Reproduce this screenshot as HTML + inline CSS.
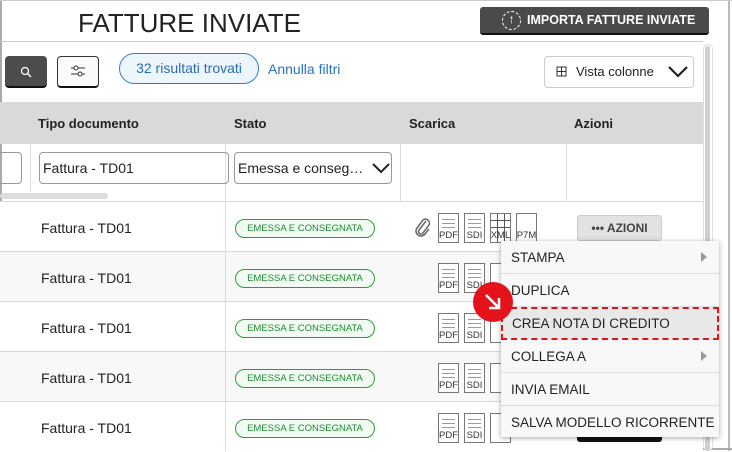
<!DOCTYPE html>
<html><head><meta charset="utf-8"><style>
*{box-sizing:border-box;margin:0;padding:0}
body{width:732px;height:451px;overflow:hidden;background:#fff;font-family:"Liberation Sans",Arial,sans-serif;position:relative;color:#222}
.a{position:absolute}
.row{position:absolute;left:0;width:703px;height:50px;border-bottom:1px solid #d8d8d8}
.ft{position:absolute;left:41px;font-size:14px;color:#222}
.badge{position:absolute;left:235px;width:140px;height:19px;border:1px solid #2e9a3c;border-radius:10px;background:#f2fbf3;color:#1e8a30;font-size:9.5px;text-align:center;line-height:17px}
.doc{position:absolute;width:21px;height:30px;border:1px solid #777;background:#fff;font-size:9.5px;text-align:center;color:#333;overflow:hidden}
.doc span{position:absolute;bottom:1px;left:-2px;right:-2px}
.doc i{position:absolute;left:3px;right:3px;height:1px;background:#999}
.mi{position:absolute;left:0;width:218px;height:33px;border-bottom:1px solid #ddd;font-size:13.5px;color:#222;padding-left:10px;line-height:33px}
.tri{position:absolute;right:12px;top:11px;width:0;height:0;border-left:6px solid #999;border-top:5px solid transparent;border-bottom:5px solid transparent}
</style></head><body>
<div class="a" style="left:0;top:0;width:2px;height:451px;background:#aaa"></div>
<div class="a" style="left:728px;top:0;width:2px;height:451px;background:#bbb"></div>
<div class="a" style="left:0;top:448px;width:732px;height:2px;background:#aaa"></div>
<div class="a" style="left:0;top:0;width:732px;height:1px;background:#ccc"></div>
<div class="a" style="left:78px;top:8px;font-size:26px;color:#222">FATTURE INVIATE</div>
<div class="a" style="left:480px;top:7px;width:229px;height:28px;background:#4a4a4a;border-radius:3px;border-bottom:2px solid #111;color:#fff;font-size:12.5px;font-weight:bold;line-height:26px;padding-left:47px">IMPORTA FATTURE INVIATE</div>
<div class="a" style="left:502px;top:11px;width:19px;height:19px;border:1.5px dashed #fff;border-radius:50%;color:#fff;font-size:12px;text-align:center;line-height:15px">↑</div>
<div class="a" style="left:0;top:41px;width:703px;height:1px;background:#ccc"></div>
<div class="a" style="left:5px;top:56px;width:42px;height:32px;background:#4c4c4c;border-radius:4px;border-bottom:2px solid #111"></div>
<svg class="a" style="left:20px;top:66px" width="12" height="12"><circle cx="5" cy="5" r="3.5" stroke="#fff" fill="none" stroke-width="1.3"/><line x1="7.5" y1="7.5" x2="11" y2="11" stroke="#fff" stroke-width="1.3"/></svg>
<div class="a" style="left:57px;top:56px;width:42px;height:32px;background:#fafafa;border:1px solid #333;border-radius:4px;border-bottom:2px solid #111"></div>
<svg class="a" style="left:70px;top:64px" width="16" height="14"><line x1="1" y1="4" x2="15" y2="4" stroke="#333"/><line x1="1" y1="10" x2="15" y2="10" stroke="#333"/><circle cx="6" cy="4" r="2" fill="#fff" stroke="#333"/><circle cx="10" cy="10" r="2" fill="#fff" stroke="#333"/></svg>
<div class="a" style="left:119px;top:53px;width:140px;height:31px;border:1px solid #2d7fd0;border-radius:16px;background:#eef6fd;color:#2a6cb0;font-size:14px;text-align:center;line-height:29px">32 risultati trovati</div>
<div class="a" style="left:268px;top:61px;font-size:14px;color:#2a72c4">Annulla filtri</div>
<div class="a" style="left:544px;top:56px;width:150px;height:32px;border:1px solid #ccc;border-radius:4px;background:#fff;font-size:13px;line-height:30px;padding-left:31px">Vista colonne</div>
<svg class="a" style="left:556px;top:66px" width="14" height="12"><rect x="1" y="1" width="9" height="9" fill="none" stroke="#333"/><line x1="5.5" y1="1" x2="5.5" y2="10" stroke="#333"/><line x1="1" y1="5.5" x2="10" y2="5.5" stroke="#333"/></svg>
<svg class="a" style="left:667px;top:64px" width="22" height="14"><polyline points="2,3 11,12 20,3" fill="none" stroke="#222" stroke-width="2.2"/></svg>
<div class="a" style="left:703px;top:44px;width:10px;height:407px;border:1px solid #e0e0e0;border-radius:5px;background:#fff"></div>
<div class="a" style="left:705px;top:46px;width:5px;height:405px;background:#cfcfcf;border-radius:3px"></div>
<div class="a" style="left:0;top:102px;width:703px;height:42px;background:#d9d9d9"></div>
<div class="a" style="left:38px;top:116px;font-size:13px;font-weight:bold">Tipo documento</div>
<div class="a" style="left:234px;top:116px;font-size:13px;font-weight:bold">Stato</div>
<div class="a" style="left:409px;top:116px;font-size:13px;font-weight:bold">Scarica</div>
<div class="a" style="left:574px;top:116px;font-size:13px;font-weight:bold">Azioni</div>
<div class="a" style="left:0;top:201px;width:703px;height:1px;background:#d8d8d8"></div>
<div class="a" style="left:30px;top:144px;width:1px;height:48px;background:#ddd"></div>
<div class="a" style="left:225px;top:144px;width:1px;height:307px;background:#ddd"></div>
<div class="a" style="left:400px;top:144px;width:1px;height:58px;background:#ddd"></div>
<div class="a" style="left:566px;top:144px;width:1px;height:58px;background:#ddd"></div>
<div class="a" style="left:-10px;top:152px;width:32px;height:32px;border:1px solid #999;border-radius:4px"></div>
<div class="a" style="left:39px;top:152px;width:190px;height:32px;border:1px solid #999;border-radius:4px;font-size:14px;line-height:30px;padding-left:3px">Fattura - TD01</div>
<div class="a" style="left:234px;top:152px;width:158px;height:32px;border:1px solid #999;border-radius:4px;font-size:14px;line-height:30px;padding-left:3px">Emessa e conseg…</div>
<svg class="a" style="left:372px;top:162px" width="18" height="12"><polyline points="1,2 9,10 17,2" fill="none" stroke="#222" stroke-width="2"/></svg>
<div class="a" style="left:0;top:193px;width:108px;height:6px;background:#ddd;border-radius:3px"></div>

<div class="row" style="top:202px;background:#fff"></div>
<div class="row" style="top:252px;background:#f8f8f8"></div>
<div class="row" style="top:302px;background:#fff"></div>
<div class="row" style="top:352px;background:#f8f8f8"></div>
<div class="row" style="top:402px;background:#fff;border:none"></div>
<div class="a" style="left:225px;top:202px;width:1px;height:249px;background:#ddd"></div>

<div class="ft" style="top:220px">Fattura - TD01</div>
<div class="ft" style="top:270px">Fattura - TD01</div>
<div class="ft" style="top:320px">Fattura - TD01</div>
<div class="ft" style="top:370px">Fattura - TD01</div>
<div class="ft" style="top:420px">Fattura - TD01</div>
<div class="badge" style="top:219px">EMESSA E CONSEGNATA</div>
<div class="badge" style="top:269px">EMESSA E CONSEGNATA</div>
<div class="badge" style="top:319px">EMESSA E CONSEGNATA</div>
<div class="badge" style="top:369px">EMESSA E CONSEGNATA</div>
<div class="badge" style="top:419px">EMESSA E CONSEGNATA</div>

<svg class="a" style="left:414px;top:217px" width="18" height="22"><path d="M12 4 L5 13 a2.5 2.5 0 0 0 4 3 L15 8 a4 4 0 0 0 -6 -5 L3 11 a5 5 0 0 0 8 6 L15 12" fill="none" stroke="#666" stroke-width="1.5"/></svg>
<div class="doc" style="left:438px;top:213px"><i style="top:5px"></i><i style="top:9px"></i><i style="top:13px"></i><span>PDF</span></div>
<div class="doc" style="left:464px;top:213px"><i style="top:5px"></i><i style="top:9px"></i><i style="top:13px"></i><span>SDI</span></div>
<div class="doc" style="left:490px;top:213px;background:linear-gradient(90deg,transparent 6px,#555 6px,#555 7px,transparent 7px,transparent 13px,#555 13px,#555 14px,transparent 14px),linear-gradient(transparent 6px,#555 6px,#555 7px,transparent 7px,transparent 13px,#555 13px,#555 14px,transparent 14px)"><span>XML</span></div>
<div class="doc" style="left:516px;top:213px"><span>P7M</span></div>
<div class="a" style="left:577px;top:215px;width:85px;height:26px;background:#e2e2e2;border:1px solid #ccc;border-radius:3px;font-size:12px;font-weight:bold;color:#444;line-height:24px;text-align:center">••• AZIONI</div>

<div class="doc" style="left:438px;top:263px"><i style="top:5px"></i><i style="top:9px"></i><i style="top:13px"></i><span>PDF</span></div>
<div class="doc" style="left:464px;top:263px"><i style="top:5px"></i><i style="top:9px"></i><i style="top:13px"></i><span>SDI</span></div>
<div class="doc" style="left:490px;top:263px"></div>
<div class="doc" style="left:438px;top:313px"><i style="top:5px"></i><i style="top:9px"></i><i style="top:13px"></i><span>PDF</span></div>
<div class="doc" style="left:464px;top:313px"><i style="top:5px"></i><i style="top:9px"></i><i style="top:13px"></i><span>SDI</span></div>
<div class="doc" style="left:490px;top:313px"></div>
<div class="doc" style="left:438px;top:363px"><i style="top:5px"></i><i style="top:9px"></i><i style="top:13px"></i><span>PDF</span></div>
<div class="doc" style="left:464px;top:363px"><i style="top:5px"></i><i style="top:9px"></i><i style="top:13px"></i><span>SDI</span></div>
<div class="doc" style="left:490px;top:363px"></div>
<div class="doc" style="left:438px;top:413px"><i style="top:5px"></i><i style="top:9px"></i><i style="top:13px"></i><span>PDF</span></div>
<div class="doc" style="left:464px;top:413px"><i style="top:5px"></i><i style="top:9px"></i><i style="top:13px"></i><span>SDI</span></div>
<div class="doc" style="left:490px;top:413px"></div>
<div class="a" style="left:577px;top:430px;width:85px;height:12px;background:#111;border-radius:3px"></div>

<div class="a" style="left:501px;top:241px;width:218px;height:196px;background:#f8f8f8;box-shadow:0 1px 5px rgba(0,0,0,.35)">
<div class="mi" style="top:0">STAMPA<div class="tri"></div></div>
<div class="mi" style="top:33px">DUPLICA</div>
<div class="mi" style="top:66px;background:#e8e8e8;border:2px dashed #e0141b;line-height:29px;padding-left:9px">CREA NOTA DI CREDITO</div>
<div class="mi" style="top:99px">COLLEGA A<div class="tri"></div></div>
<div class="mi" style="top:132px">INVIA EMAIL</div>
<div class="mi" style="top:165px;border:none">SALVA MODELLO RICORRENTE</div>
</div>
<div class="a" style="left:473px;top:282px;width:40px;height:40px;border-radius:50%;background:#e3121b"></div>
<svg class="a" style="left:481px;top:290px" width="24" height="24"><line x1="5" y1="5" x2="18" y2="18" stroke="#fff" stroke-width="2.5"/><polyline points="8,18 18,18 18,8" fill="none" stroke="#fff" stroke-width="2.5"/></svg>
</body></html>
